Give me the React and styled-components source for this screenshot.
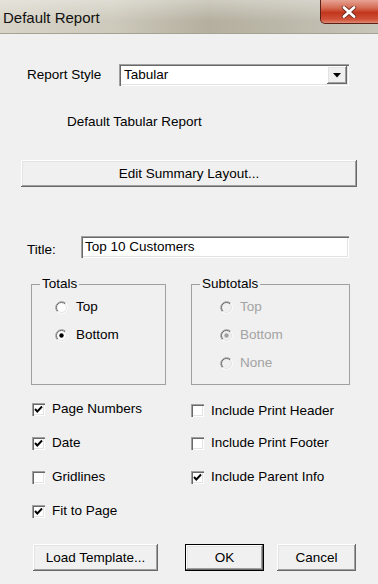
import React from 'react'
import styled, { createGlobalStyle, css } from 'styled-components'

const GlobalStyle = createGlobalStyle`
  html, body {
    margin: 0;
    padding: 0;
    background: #f0f0f0;
  }
  body {
    font-family: "Liberation Sans", Arial, sans-serif;
    font-size: 13.5px;
    line-height: 16px;
    color: #000;
  }
`

const raised = css`
  background: #f0f0f0;
  box-shadow:
    inset -1px -1px #696969,
    inset 1px 1px #ffffff,
    inset -2px -2px #a0a0a0,
    inset 2px 2px #e3e3e3;
`

const sunken = css`
  background: #fff;
  box-shadow:
    inset 1px 1px #a0a0a0,
    inset 2px 2px #696969,
    inset -1px -1px #ffffff,
    inset -2px -2px #e3e3e3;
`

const Window = styled.div`
  width: 378px;
  height: 584px;
  overflow: hidden;
  background: #f0f0f0;
  display: flex;
  flex-direction: column;
`

const TitleBar = styled.div`
  height: 33px;
  flex: none;
  display: flex;
  align-items: flex-start;
  border-bottom: 1px solid #a6a293;
  background:
    linear-gradient(180deg, rgba(255,255,255,0.35), rgba(255,255,255,0) 65%),
    linear-gradient(90deg, #d8d4c8 0%, #cdc9bb 30%, #b4af9e 55%, #bcb8a9 75%, #c8c5ba 100%);
`

const TitleText = styled.span`
  flex: 1;
  padding-left: 3px;
  line-height: 36px;
  font-size: 15px;
  color: #111;
`

const CloseButton = styled.div`
  width: 60px;
  height: 23px;
  margin-right: -4px;
  border: 1px solid #5a2218;
  border-top: none;
  border-bottom-left-radius: 5px;
  display: flex;
  align-items: center;
  background: linear-gradient(180deg, #e6a394 0%, #d46a52 35%, #c2361c 55%, #d0533a 85%, #e08a74 100%);
  svg {
    margin-left: 20px;
  }
`

const Body = styled.div`
  padding: 0 21px;
  display: flex;
  flex-direction: column;
`

const FieldRow = styled.div`
  display: flex;
  align-items: flex-start;
  margin-top: ${p => p.top}px;
  padding-left: 6px;
`

const Label = styled.span`
  width: ${p => p.width}px;
  flex: none;
  line-height: 16px;
  padding-top: ${p => p.drop || 3}px;
`

const Select = styled.div`
  ${sunken}
  width: 230px;
  height: 22px;
  display: flex;
  align-items: center;
  box-sizing: border-box;
  padding: 2px;
`

const SelectValue = styled.span`
  flex: 1;
  padding-left: 3px;
  line-height: 18px;
`

const ArrowButton = styled.div`
  ${raised}
  width: 20px;
  height: 18px;
  display: flex;
  align-items: center;
  justify-content: center;
`

const TextInput = styled.div`
  ${sunken}
  width: 268px;
  height: 22px;
  box-sizing: border-box;
  padding: 0 4px;
  line-height: 22px;
`

const Description = styled.div`
  margin-top: 28px;
  padding-left: 46px;
  line-height: 16px;
`

const Button = styled.div`
  ${raised}
  box-sizing: border-box;
  height: 27px;
  width: ${p => (p.width ? `${p.width}px` : 'auto')};
  margin-left: ${p => p.left || 0}px;
  display: flex;
  align-items: center;
  justify-content: center;
  line-height: 16px;
  ${p => p.primary && css`
    border: 1px solid #000;
  `}
`

const WideButton = styled(Button)`
  margin-top: 30px;
`

const GroupRow = styled.div`
  display: flex;
  align-items: flex-start;
  margin-top: 26px;
  padding-left: 10px;
  gap: 25px;
`

const GroupBox = styled.div`
  width: ${p => p.width}px;
  height: 101px;
  box-sizing: border-box;
  border: 1px solid #a0a0a0;
  padding-left: ${p => p.indent}px;
  display: flex;
  flex-direction: column;
`

/* caption sits on the top border line, like a Win32 group box */
const GroupTitle = styled.span`
  align-self: flex-start;
  margin: -9px 0 1px ${p => 8 - p.indent}px;
  padding: 0 2px;
  line-height: 16px;
  background: #f0f0f0;
  color: #000;
`

const OptionRow = styled.div`
  display: flex;
  align-items: center;
  height: 28px;
  gap: ${p => p.gap || 8}px;
  color: ${p => (p.disabled ? '#a3a3a3' : '#000')};
`

const CheckGrid = styled.div`
  margin-top: 7px;
  padding-left: 11px;
  display: grid;
  grid-template-columns: 159px 1fr;
  grid-auto-rows: 34px;
`

const CheckRow = styled.div`
  display: flex;
  align-items: center;
  gap: 7px;
  padding-top: ${p => p.drop || 0}px;
`

const Box = styled.span`
  ${sunken}
  width: 13px;
  height: 13px;
  flex: none;
  display: flex;
  align-items: center;
  justify-content: center;
`

const ButtonRow = styled.div`
  display: flex;
  margin-top: 16px;
  padding-left: 12px;
`

const Radio = ({ checked, disabled }) => (
  <svg width="13" height="13" viewBox="0 0 13 13">
    <circle cx="6.5" cy="6.5" r="5.5" fill={disabled ? '#f0f0f0' : '#fff'} />
    <path d="M2.26 10.74 A6 6 0 0 1 10.74 2.26" fill="none" stroke="#a0a0a0" />
    <path d="M2.96 10.04 A5 5 0 0 1 10.04 2.96" fill="none" stroke="#696969" />
    <path d="M10.74 2.26 A6 6 0 0 1 2.26 10.74" fill="none" stroke="#ffffff" />
    <path d="M10.04 2.96 A5 5 0 0 1 2.96 10.04" fill="none" stroke="#e3e3e3" />
    {checked && <circle cx="6.5" cy="6.5" r="2.2" fill={disabled ? '#a0a0a0' : '#000'} />}
  </svg>
)

const Check = ({ checked, label, drop }) => (
  <CheckRow drop={drop}>
    <Box>
      {checked && (
        <svg width="9" height="9" viewBox="0 0 9 9">
          <path d="M1 4 L3.3 6.5 L8 1.5" fill="none" stroke="#000" strokeWidth="1.9" />
        </svg>
      )}
    </Box>
    <span>{label}</span>
  </CheckRow>
)

export default function App() {
  return (
    <>
      <GlobalStyle />
      <Window>
        <TitleBar>
          <TitleText>Default Report</TitleText>
          <CloseButton>
            <svg width="16" height="12" viewBox="0 0 16 12">
              <path d="M3 1.5 L13 10.5 M13 1.5 L3 10.5" stroke="#6b2a1e" strokeWidth="4.4" strokeLinecap="round" />
              <path d="M3 1.5 L13 10.5 M13 1.5 L3 10.5" stroke="#ffffff" strokeWidth="2.8" strokeLinecap="round" />
            </svg>
          </CloseButton>
        </TitleBar>

        <Body>
          <FieldRow top={30}>
            <Label width={92}>Report Style</Label>
            <Select>
              <SelectValue>Tabular</SelectValue>
              <ArrowButton>
                <svg width="8" height="5" viewBox="0 0 8 5">
                  <path d="M0 0 H8 L4 4.5 Z" fill="#000" />
                </svg>
              </ArrowButton>
            </Select>
          </FieldRow>

          <Description>Default Tabular Report</Description>

          <WideButton>Edit Summary Layout...</WideButton>

          <FieldRow top={49}>
            <Label width={54} drop={6}>Title:</Label>
            <TextInput>Top 10 Customers</TextInput>
          </FieldRow>

          <GroupRow>
            <GroupBox width={135} indent={23}>
              <GroupTitle indent={23}>Totals</GroupTitle>
              <OptionRow><Radio /><span>Top</span></OptionRow>
              <OptionRow><Radio checked /><span>Bottom</span></OptionRow>
            </GroupBox>
            <GroupBox width={159} indent={28}>
              <GroupTitle indent={28}>Subtotals</GroupTitle>
              <OptionRow disabled gap={7}><Radio disabled /><span>Top</span></OptionRow>
              <OptionRow disabled gap={7}><Radio disabled checked /><span>Bottom</span></OptionRow>
              <OptionRow disabled gap={7}><Radio disabled /><span>None</span></OptionRow>
            </GroupBox>
          </GroupRow>

          <CheckGrid>
            <Check checked label="Page Numbers" />
            <Check label="Include Print Header" drop={3} />
            <Check checked label="Date" />
            <Check label="Include Print Footer" />
            <Check label="Gridlines" />
            <Check checked label="Include Parent Info" />
            <Check checked label="Fit to Page" />
          </CheckGrid>

          <ButtonRow>
            <Button width={125}>Load Template...</Button>
            <Button width={79} left={27} primary>OK</Button>
            <Button width={79} left={13}>Cancel</Button>
          </ButtonRow>
        </Body>
      </Window>
    </>
  )
}
